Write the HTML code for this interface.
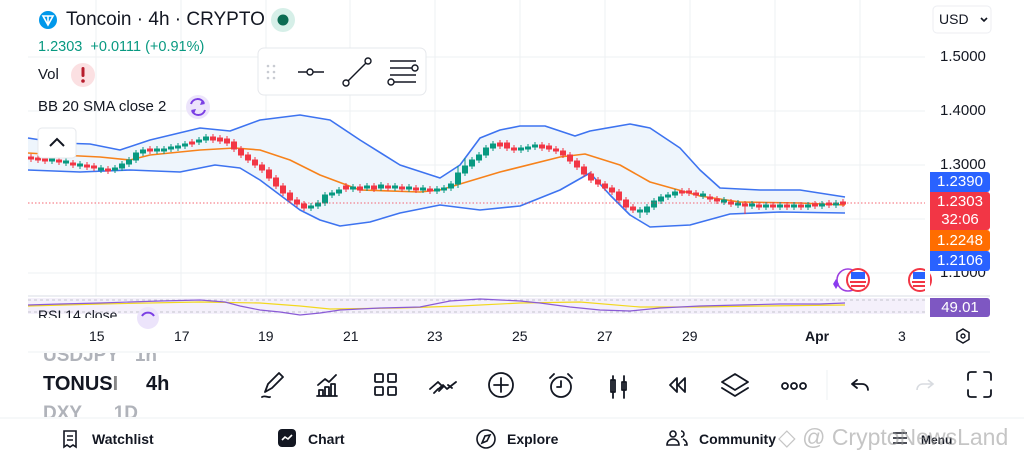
<!DOCTYPE html>
<html><head><meta charset="utf-8"><style>
*{margin:0;padding:0;box-sizing:border-box}
body{width:1024px;height:461px;overflow:hidden;background:#fff;font-family:"Liberation Sans",sans-serif;color:#131722;position:relative}
.a{position:absolute;white-space:nowrap}
.ax{position:absolute;left:940px;font-size:15px;color:#131722}
.lb{position:absolute;left:930px;width:60px;color:#fff;font-size:15px;text-align:center;border-radius:0 3px 3px 0}
.t{position:absolute;top:328px;font-size:14px;color:#131722}
.tab{position:absolute;top:431px;font-size:14px;font-weight:bold}
</style></head><body>
<svg class="a" style="left:0;top:0" width="1024" height="461" xmlns="http://www.w3.org/2000/svg">
<g stroke="#eef0f3" stroke-width="1">
<line x1="96" y1="0" x2="96" y2="296"/><line x1="181" y1="0" x2="181" y2="296"/><line x1="266" y1="0" x2="266" y2="296"/><line x1="350" y1="0" x2="350" y2="296"/><line x1="435" y1="0" x2="435" y2="296"/><line x1="520" y1="0" x2="520" y2="296"/><line x1="605" y1="0" x2="605" y2="296"/><line x1="690" y1="0" x2="690" y2="296"/><line x1="775" y1="0" x2="775" y2="296"/><line x1="860" y1="0" x2="860" y2="296"/>
<line x1="28" y1="57" x2="925" y2="57"/><line x1="28" y1="111" x2="925" y2="111"/><line x1="28" y1="165" x2="925" y2="165"/><line x1="28" y1="219" x2="925" y2="219"/><line x1="28" y1="273" x2="925" y2="273"/>
</g>
<path fill="#eef5fc" d="M28,138 L60,143 L90,144 L120,150 L150,140 L200,128 L230,131 L260,120 L300,115 L330,120 L360,140 L400,165 L440,178 L460,165 L480,138 L500,130 L520,126 L545,126 L575,136 L590,131 L630,124 L650,128 L680,148 L700,170 L720,188 L760,190 L800,190 L845,197 L845,213 L780,212 L730,214 L690,225 L650,227 L630,215 L610,195 L590,173 L560,190 L520,206 L480,210 L440,205 L400,213 L370,222 L340,226 L320,220 L300,210 L280,195 L260,180 L240,168 L215,165 L180,172 L130,170 L80,172 L28,170Z"/>
<path fill="none" stroke="#3d73f0" stroke-width="1.6" stroke-linejoin="round" d="M28,138 L60,143 L90,144 L120,150 L150,140 L200,128 L230,131 L260,120 L300,115 L330,120 L360,140 L400,165 L440,178 L460,165 L480,138 L500,130 L520,126 L545,126 L575,136 L590,131 L630,124 L650,128 L680,148 L700,170 L720,188 L760,190 L800,190 L845,197"/>
<path fill="none" stroke="#3d73f0" stroke-width="1.6" stroke-linejoin="round" d="M28,170 L80,172 L130,170 L180,172 L215,165 L240,168 L260,180 L280,195 L300,210 L320,220 L340,226 L370,222 L400,213 L440,205 L480,210 L520,206 L560,190 L590,173 L610,195 L630,215 L650,227 L690,225 L730,214 L780,212 L845,213"/>
<path fill="none" stroke="#f7821b" stroke-width="1.6" stroke-linejoin="round" d="M28,153 L60,155 L100,157 L130,160 L150,155 L200,150 L235,148 L260,150 L290,160 L320,175 L360,190 L420,192 L440,190 L500,172 L560,157 L585,154 L620,165 L650,182 L700,196 L740,202 L800,203 L845,205"/>
<path stroke="#f23645" fill="#f23645" stroke-width="1" d="M31,154V162M28.5,157h5v2h-5z M38,155V163M35.5,158h5v2h-5z M45,156V164M42.5,159h5v2h-5z M59,157V165M56.5,160h5v2h-5z M73,160V168M70.5,163h5v2h-5z M87,162V170M84.5,165h5v2h-5z M94,163V171M91.5,166h5v2h-5z M108,166V174M105.5,169h5v2h-5z M150,146V154M147.5,149h5v2h-5z M192,139V147M189.5,142h5v2h-5z M213,134V143M210.5,137h5v3h-5z M220,135V144M217.5,138h5v3h-5z M227,136V146M224.5,139h5v4h-5z M234,139V152M231.5,142h5v7h-5z M241,146V158M238.5,149h5v6h-5z M248,152V163M245.5,155h5v5h-5z M255,157V168M252.5,160h5v5h-5z M262,162V173M259.5,165h5v5h-5z M269,167V181M266.5,170h5v8h-5z M276,175V189M273.5,178h5v8h-5z M283,183V196M280.5,186h5v7h-5z M290,190V203M287.5,193h5v7h-5z M297,197V207M294.5,200h5v4h-5z M304,201V211M301.5,204h5v4h-5z M346,183V192M343.5,186h5v3h-5z M360,184V193M357.5,187h5v3h-5z M374,183V192M371.5,186h5v3h-5z M388,183V191M385.5,186h5v2h-5z M402,184V192M399.5,187h5v2h-5z M416,185V193M413.5,188h5v2h-5z M430,186V194M427.5,189h5v2h-5z M500,140V149M497.5,143h5v3h-5z M507,140V151M504.5,143h5v5h-5z M514,145V153M511.5,148h5v2h-5z M542,142V151M539.5,145h5v3h-5z M549,143V152M546.5,146h5v3h-5z M556,146V154M553.5,149h5v2h-5z M563,148V158M560.5,151h5v4h-5z M570,152V164M567.5,155h5v6h-5z M577,158V170M574.5,161h5v6h-5z M584,164V177M581.5,167h5v7h-5z M591,171V183M588.5,174h5v6h-5z M598,177V187M595.5,180h5v4h-5z M605,181V191M602.5,184h5v4h-5z M612,185V195M609.5,188h5v4h-5z M619,189V203M616.5,192h5v8h-5z M626,197V210M623.5,200h5v7h-5z M633,204V213M630.5,207h5v3h-5z M682,188V196M679.5,191h5v2h-5z M689,188V196M686.5,191h5v2h-5z M696,190V198M693.5,193h5v2h-5z M710,194V202M707.5,197h5v2h-5z M717,196V204M714.5,199h5v2h-5z M731,199V207M728.5,202h5v2h-5z M745,201V214M742.5,204h5v2h-5z M759,202V210M756.5,205h5v2h-5z M773,202V210M770.5,205h5v2h-5z M787,202V210M784.5,205h5v2h-5z M801,202V210M798.5,205h5v2h-5z M815,201V209M812.5,204h5v2h-5z M829,200V208M826.5,203h5v2h-5z M843,199V207M840.5,202h5v2h-5z"/>
<path stroke="#089981" fill="#089981" stroke-width="1" d="M52,156V164M49.5,159h5v2h-5z M66,158V166M63.5,161h5v2h-5z M80,161V169M77.5,164h5v2h-5z M101,165V173M98.5,168h5v2h-5z M115,165V173M112.5,168h5v2h-5z M122,161V171M119.5,164h5v4h-5z M129,157V167M126.5,160h5v4h-5z M136,150V163M133.5,153h5v7h-5z M143,147V156M140.5,150h5v3h-5z M157,146V154M154.5,149h5v2h-5z M164,146V154M161.5,149h5v2h-5z M171,144V152M168.5,147h5v2h-5z M178,143V151M175.5,146h5v2h-5z M185,141V149M182.5,144h5v2h-5z M199,137V145M196.5,140h5v2h-5z M206,134V143M203.5,137h5v3h-5z M311,203V211M308.5,206h5v2h-5z M318,200V209M315.5,203h5v3h-5z M325,192V206M322.5,195h5v8h-5z M332,190V198M329.5,193h5v2h-5z M339,187V196M336.5,190h5v3h-5z M353,184V192M350.5,187h5v2h-5z M367,183V191M364.5,186h5v2h-5z M381,182V191M378.5,185h5v3h-5z M395,183V191M392.5,186h5v2h-5z M409,184V192M406.5,187h5v2h-5z M423,185V193M420.5,188h5v2h-5z M437,186V194M434.5,189h5v2h-5z M444,185V193M441.5,188h5v2h-5z M451,181V191M448.5,184h5v4h-5z M458,166V188M455.5,173h5v11h-5z M465,158V176M462.5,166h5v7h-5z M472,157V169M469.5,160h5v6h-5z M479,152V163M476.5,155h5v5h-5z M486,145V158M483.5,148h5v7h-5z M493,141V151M490.5,144h5v4h-5z M521,145V153M518.5,148h5v2h-5z M528,144V152M525.5,147h5v2h-5z M535,142V150M532.5,145h5v2h-5z M640,207V218M637.5,210h5v2h-5z M647,204V215M644.5,207h5v5h-5z M654,198V210M651.5,201h5v6h-5z M661,194V204M658.5,197h5v4h-5z M668,192V200M665.5,195h5v2h-5z M675,189V198M672.5,192h5v3h-5z M703,191V199M700.5,194h5v2h-5z M724,197V205M721.5,200h5v2h-5z M738,200V208M735.5,203h5v2h-5z M752,201V209M749.5,204h5v2h-5z M766,202V210M763.5,205h5v2h-5z M780,202V210M777.5,205h5v2h-5z M794,202V210M791.5,205h5v2h-5z M808,202V210M805.5,205h5v2h-5z M822,201V209M819.5,204h5v2h-5z M836,200V208M833.5,203h5v2h-5z"/>
<line x1="28" y1="203" x2="925" y2="203" stroke="#f23645" stroke-width="0.8" stroke-dasharray="1.5 2"/>
<line x1="28" y1="296" x2="990" y2="296" stroke="#d8dce6"/>
<rect x="28" y="298" width="897" height="16" fill="#f4f0fb"/>
<line x1="28" y1="300" x2="925" y2="300" stroke="#b2b5be" stroke-dasharray="3 3" stroke-width="0.8"/>
<line x1="28" y1="312" x2="925" y2="312" stroke="#b2b5be" stroke-dasharray="3 3" stroke-width="0.8"/>
<polyline fill="none" stroke="#f2d81f" stroke-width="1.2" points="28,306 100,304 200,302 260,303 300,306 330,309 400,308 460,306 520,303 580,302 640,307 700,307 760,306 845,305"/>
<polyline fill="none" stroke="#8a5bd6" stroke-width="1.2" points="28,305 60,304 100,303 130,302 160,301 200,300 225,302 240,306 260,310 280,312 300,315 320,313 340,310 380,308 420,307 450,301 480,299 500,300 520,301 540,303 570,307 600,310 630,311 660,308 700,306 740,305 780,304 820,304 845,303"/>
<line x1="28" y1="352" x2="990" y2="352" stroke="#eef0f3"/>
<line x1="0" y1="418" x2="1024" y2="418" stroke="#eef0f3"/>
<line x1="827" y1="370" x2="827" y2="400" stroke="#eef0f3"/>
<circle cx="48" cy="20" r="9" fill="#0098ea"/><path d="M43,16h10l-5,9z M48,16v9" stroke="#fff" stroke-width="1.6" fill="none"/>
<circle cx="283" cy="20" r="12" fill="#d6efe8"/><circle cx="283" cy="20" r="5.5" fill="#0b6b52"/>
<circle cx="83" cy="75" r="12" fill="#fbe0e2"/><rect x="81.5" y="67" width="3" height="10" rx="1.5" fill="#b71c2c"/><circle cx="83" cy="81" r="1.8" fill="#b71c2c"/>
<circle cx="198" cy="107" r="12" fill="#ece4fb"/><path d="M191,104a7,7 0 0 1 13,-1 M205,110a7,7 0 0 1 -13,1" stroke="#7b3fe4" stroke-width="2" fill="none"/><path d="M202,100l3,4l-5,1z M194,114l-3,-4l5,-1z" fill="#7b3fe4"/>
<rect x="258" y="48" width="168" height="47" rx="6" fill="#fff" stroke="#e6e8ec"/>
<g fill="#c8cbd2"><circle cx="268" cy="66" r="1.3"/><circle cx="274" cy="66" r="1.3"/><circle cx="268" cy="72" r="1.3"/><circle cx="274" cy="72" r="1.3"/><circle cx="268" cy="78" r="1.3"/><circle cx="274" cy="78" r="1.3"/></g>
<g stroke="#131722" stroke-width="1.4" fill="#fff"><path d="M298,72h26"/><circle cx="310" cy="72" r="3"/><path d="M347,82l20,-20"/><circle cx="346" cy="83" r="3"/><circle cx="368" cy="61" r="3"/><path d="M390,61h26M390,68h26M390,75h26M394,82h22"/><circle cx="415" cy="68" r="3"/><circle cx="391" cy="82" r="3"/></g>
<rect x="38" y="128" width="38" height="30" rx="4" fill="#fff" stroke="#e6e8ec"/><path d="M50,146l7,-7l7,7" stroke="#131722" stroke-width="2" fill="none"/>
<rect x="933" y="6" width="58" height="27" rx="4" fill="#fff" stroke="#eceef2"/>
<path d="M981,18l3,3l3,-3" stroke="#131722" stroke-width="1.6" fill="none"/>
<circle cx="848" cy="280" r="11" fill="none" stroke="#9c3fe0" stroke-width="1.6"/><path d="M833,284l3,-5l3,5l-3,5z" fill="#8b3cf0"/>
<circle cx="858" cy="280" r="11" fill="#fff" stroke="#f23645" stroke-width="2"/><rect x="851" y="272" width="14" height="7" fill="#2962ff"/><path d="M850,282h16M851,286h14" stroke="#f23645" stroke-width="2"/>
<circle cx="920" cy="280" r="11" fill="#fff" stroke="#f23645" stroke-width="2"/><rect x="913" y="272" width="14" height="7" fill="#2962ff"/><path d="M912,282h16M913,286h14" stroke="#f23645" stroke-width="2"/>
<rect x="925" y="265" width="5" height="30" fill="#fff"/>
<circle cx="148" cy="318" r="11" fill="#ece4fb"/><path d="M142,316a7,7 0 0 1 12,0" stroke="#7b3fe4" stroke-width="2" fill="none"/>
<path d="M963,329l6,3.5v7l-6,3.5l-6,-3.5v-7z" stroke="#131722" stroke-width="1.5" fill="none"/><circle cx="963" cy="336" r="2" stroke="#131722" stroke-width="1.4" fill="none"/>
<g stroke="#131722" stroke-width="1.8" fill="none" stroke-linecap="round" stroke-linejoin="round">
<path d="M265,392l3,-8l11,-11l4,4l-11,11z M262,397c3,-2 6,1 8,0"/>
<path d="M317,396h20M319,396v-6h4v6M325,396v-9h4v9M331,396v-12h4v12M318,385l7,-6l4,3l7,-7"/>
<rect x="375" y="374" width="8" height="8" rx="1"/><rect x="388" y="374" width="8" height="8" rx="1"/><rect x="375" y="387" width="8" height="8" rx="1"/><rect x="388" y="387" width="8" height="8" rx="1"/>
<path d="M430,389l8,-7l5,5l-4,4M436,391l7,-6l4,4l9,-7M434,393l4,-4M448,385l4,3"/>
<circle cx="501" cy="385" r="12"/><path d="M501,378v14M494,385h14"/>
<circle cx="561" cy="387" r="10"/><path d="M561,381v6h-4M550,378l4,-4M572,378l-4,-4"/>
<path d="M613,376v22M624,376v22"/><rect x="611" y="380" width="4" height="12"/><rect x="622" y="382" width="4" height="8"/>
<path d="M677,378l-7,7l7,7zM685,378l-7,7l7,7z"/>
<path d="M735,374l13,8l-13,8l-13,-8zM722,388l13,8l13,-8"/>
<circle cx="785" cy="386" r="3"/><circle cx="794" cy="386" r="3"/><circle cx="803" cy="386" r="3"/>
<path d="M857,380l-5,4l5,4M852,384h10c4,0 6,3 6,6"/>
<path d="M968,380v-5c0,-2 1,-3 3,-3h5M984,372h4c2,0 3,1 3,3v5M991,390v4c0,2 -1,3 -3,3h-4M976,397h-5c-2,0 -3,-1 -3,-3v-4"/>
</g>
<path d="M928,380l5,4l-5,4M933,384h-10c-4,0 -6,3 -6,6" stroke="#d8dbe0" stroke-width="1.6" fill="none"/>
<g stroke="#131722" stroke-width="1.6" fill="none"><path d="M64,431h12v16l-3,-2l-3,2l-3,-2l-3,2zM67,436h6M67,440h6"/>
<circle cx="486" cy="439" r="9"/><path d="M482,443l3,-7l5,-1l-3,6z"/>
<circle cx="673" cy="434" r="3"/><path d="M667,445c0,-4 3,-6 6,-6s6,2 6,6zM681,431a3,3 0 0 1 0,6M683,439c2,1 4,3 4,6h-3"/>
<path d="M893,433h14M893,438h14M893,443h14"/></g>
<rect x="278" y="429" width="18" height="18" rx="4" fill="#131722"/><path d="M282,440l3,-3l3,2l4,-4" stroke="#fff" stroke-width="1.6" fill="none"/>
</svg>
<div class="a" style="left:66px;top:9px;font-size:19px">Toncoin · 4h · CRYPTO</div>
<div class="a" style="left:38px;top:39px;font-size:14.5px;color:#089981">1.2303&nbsp; +0.0111 (+0.91%)</div>
<div class="a" style="left:38px;top:66px;font-size:15px">Vol</div>
<div class="a" style="left:38px;top:98px;font-size:15px">BB 20 SMA close 2</div>
<div class="a" style="left:939px;top:11px;font-size:14px">USD</div>
<div class="ax" style="top:48px">1.5000</div>
<div class="ax" style="top:102px">1.4000</div>
<div class="ax" style="top:156px">1.3000</div>
<div class="ax" style="top:264px">1.1000</div>
<div class="lb" style="top:172px;height:20px;line-height:20px;background:#2962ff">1.2390</div>
<div class="lb" style="top:192px;height:38px;line-height:18px;background:#f23645;padding-top:1px">1.2303<br>32:06</div>
<div class="lb" style="top:230px;height:21px;line-height:21px;background:#ff6d00">1.2248</div>
<div class="lb" style="top:251px;height:20px;line-height:20px;background:#2962ff">1.2106</div>
<div class="lb" style="top:298px;height:19px;line-height:19px;background:#7e57c2">49.01</div>
<div class="a" style="left:38px;top:308px;font-size:14px;height:10px;overflow:hidden;line-height:14px">RSI 14 close</div>
<div class="t" style="left:89px">15</div><div class="t" style="left:174px">17</div><div class="t" style="left:258px">19</div><div class="t" style="left:343px">21</div><div class="t" style="left:427px">23</div><div class="t" style="left:512px">25</div><div class="t" style="left:597px">27</div><div class="t" style="left:682px">29</div><div class="t" style="left:805px;font-weight:bold">Apr</div><div class="t" style="left:898px">3</div>
<div class="a" style="left:43px;top:353px;height:8px;overflow:hidden;font-size:19px;color:#b0b3ba;line-height:6px;font-weight:bold">USDJPY&nbsp;&nbsp; 1h</div>
<div class="a" style="left:43px;top:373px;font-size:20px;font-weight:bold">TONUS<span style="color:#888">I</span></div>
<div class="a" style="left:146px;top:373px;font-size:20px;font-weight:bold">4h</div>
<div class="a" style="left:43px;top:403px;height:14px;overflow:hidden;font-size:19px;color:#b0b3ba;font-weight:bold">DXY&nbsp;&nbsp;&nbsp;&nbsp;&nbsp;&nbsp;1D</div>
<div class="tab" style="left:92px">Watchlist</div>
<div class="tab" style="left:308px">Chart</div>
<div class="tab" style="left:507px">Explore</div>
<div class="tab" style="left:699px">Community</div>
<div class="tab" style="left:921px;font-size:12px;top:433px">Menu</div>
<div class="a" style="left:778px;top:424px;font-size:23px;color:rgba(150,150,150,0.55)">◇ @ CryptoNewsLand</div>
</body></html>
